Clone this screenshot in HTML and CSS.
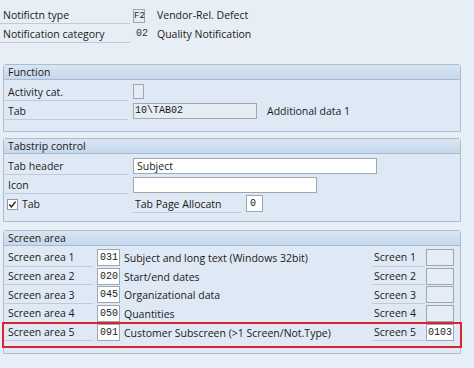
FILE: index.html
```html
<!DOCTYPE html>
<html lang="en">
<head>
    <meta charset="UTF-8">
    <title>Notification type settings</title>
    <link rel="stylesheet" href="styles.css">
</head>
<body>
    <div class="top">
        <div class="row">
            <span class="lbl">Notifictn type</span>
            <span class="fld fld-ro w-f2">F2</span>
            <span class="txt txt-f2">Vendor-Rel. Defect</span>
        </div>
        <div class="row">
            <span class="lbl">Notification category</span>
            <span class="val">02</span>
            <span class="txt">Quality Notification</span>
        </div>
    </div>

    <div class="group g-function">
        <div class="group-hd">Function</div>
        <div class="group-body">
            <div class="row">
                <span class="lbl">Activity cat.</span>
                <span class="fld fld-ro w-chk"></span>
            </div>
            <div class="row">
                <span class="lbl">Tab</span>
                <span class="fld fld-ro w-tab">10\TAB02</span>
                <span class="txt txt-add">Additional data 1</span>
            </div>
        </div>
    </div>

    <div class="group g-tabstrip">
        <div class="group-hd">Tabstrip control</div>
        <div class="group-body">
            <div class="row">
                <span class="lbl">Tab header</span>
                <span class="fld w-subject sans">Subject</span>
            </div>
            <div class="row">
                <span class="lbl">Icon</span>
                <span class="fld w-icon"></span>
            </div>
            <div class="row">
                <span class="lbl lbl-plain">
                    <svg class="cb" width="11" height="11" viewBox="0 0 11 11">
                        <rect x="0.5" y="0.5" width="10" height="10" fill="#fff" stroke="#8d98a4"/>
                        <path d="M2.3 5.6 L4.4 7.9 L8.6 2.6" fill="none" stroke="#1e1e1e" stroke-width="1.5"/>
                    </svg>
                    Tab
                </span>
                <span class="lbl lbl-alloc">Tab Page Allocatn</span>
                <span class="fld w-zero">0</span>
            </div>
        </div>
    </div>

    <div class="group g-screen">
        <div class="group-hd">Screen area</div>
        <div class="group-body">
            <div class="row sa-row">
                <span class="lbl lbl-sa">Screen area 1</span>
                <span class="fld w-sa">031</span>
                <span class="txt desc">Subject and long text (Windows 32bit)</span>
                <span class="lbl lbl-scr">Screen 1</span>
                <span class="fld fld-ro w-scr"></span>
            </div>
            <div class="row sa-row">
                <span class="lbl lbl-sa">Screen area 2</span>
                <span class="fld w-sa">020</span>
                <span class="txt desc">Start/end dates</span>
                <span class="lbl lbl-scr">Screen 2</span>
                <span class="fld fld-ro w-scr"></span>
            </div>
            <div class="row sa-row">
                <span class="lbl lbl-sa">Screen area 3</span>
                <span class="fld w-sa">045</span>
                <span class="txt desc">Organizational data</span>
                <span class="lbl lbl-scr">Screen 3</span>
                <span class="fld fld-ro w-scr"></span>
            </div>
            <div class="row sa-row">
                <span class="lbl lbl-sa">Screen area 4</span>
                <span class="fld w-sa">050</span>
                <span class="txt desc">Quantities</span>
                <span class="lbl lbl-scr">Screen 4</span>
                <span class="fld fld-ro w-scr"></span>
            </div>
            <div class="row sa-row marked">
                <span class="lbl lbl-sa">Screen area 5</span>
                <span class="fld w-sa">091</span>
                <span class="txt desc">Customer Subscreen (&gt;1 Screen/Not.Type)</span>
                <span class="lbl lbl-scr">Screen 5</span>
                <span class="fld w-scr">0103</span>
            </div>
        </div>
    </div>
</body>
</html>
```

FILE: styles.css
```css
body {
    margin: 0;
    background: #e8eef5;
    font-family: "Open Sans", "Liberation Sans", sans-serif;
    font-size: 10.5px;
    color: #1a1a1a;
}
.top {
    padding-top: 5px;
}
.row {
    display: flex;
    align-items: center;
    height: 19px;
}
.lbl {
    box-sizing: border-box;
    align-self: stretch;
    display: flex;
    align-items: center;
    padding-top: 1px;
    border-bottom: 1px solid #c2cbd5;
    white-space: nowrap;
}
.top .lbl {
    width: 130px;
    padding-left: 3px;
    margin-right: 3px;
}
.group .lbl {
    width: 123px;
    margin-left: 1px;
    padding-left: 3px;
    margin-right: 5px;
}
.group .lbl-plain {
    border-bottom: none;
    padding-left: 2px;
}
.cb {
    margin-right: 4px;
}
.fld {
    box-sizing: border-box;
    height: 16px;
    border: 1px solid #9ea8b3;
    background: #fff;
    font-family: "Liberation Mono", "Courier New", monospace;
    font-size: 10px;
    line-height: 14px;
    padding: 0 1px;
    white-space: nowrap;
}
.fld-ro {
    background: #e6ecf3;
}
.sans {
    font-family: "Open Sans", "Liberation Sans", sans-serif;
    font-size: 10.5px;
    padding-left: 3px;
}
.val {
    font-family: "Liberation Mono", "Courier New", monospace;
    font-size: 10px;
    width: 13px;
    padding-left: 3px;
    color: #333;
}
.txt {
    margin-left: 8px;
    padding-top: 1px;
    white-space: nowrap;
}
.txt-f2 {
    margin-left: 12px;
}
.w-f2 {
    width: 12px;
    height: 14px;
    line-height: 12px;
    align-self: flex-end;
    margin-bottom: 1px;
    padding: 0;
    text-align: center;
    font-size: 9px;
}
.w-chk {
    width: 11px;
    height: 15px;
}
.w-tab {
    width: 124px;
}
.txt-add {
    margin-left: 10px;
}
.w-subject {
    width: 244px;
}
.w-icon {
    width: 184px;
}
.w-zero {
    width: 17px;
    height: 17px;
    line-height: 15px;
    padding-left: 3px;
}
.group .lbl-alloc {
    width: 108px;
    margin-left: 0;
    padding-left: 2px;
}

/* group boxes */
.group {
    margin: 0 13px 0 3px;
    border: 1px solid #adbdd0;
    border-radius: 3px 3px 0 0;
    background: #dfe9f5;
}
.group-hd {
    height: 14px;
    line-height: 14px;
    padding-left: 4px;
    background: linear-gradient(#d9e5f2, #c6d8ec);
    border-bottom: 1px solid #a6bbd2;
}
.group-body {
    padding-top: 2px;
}
.g-function {
    margin-top: 21px;
}
.g-function .group-body {
    padding-bottom: 11px;
}
.g-tabstrip {
    margin-top: 6px;
}
.g-tabstrip .group-body {
    padding-bottom: 8px;
}
.g-screen {
    margin-top: 8px;
}
.g-screen .group-body {
    padding-bottom: 12px;
}

/* screen area rows */
.sa-row {
    height: 18.7px;
}
.group .lbl-sa {
    width: 88px;
    margin-right: 4px;
}
.w-sa {
    width: 23px;
    height: 17px;
    line-height: 15px;
    padding-left: 2px;
}
.desc {
    flex: 1;
    margin-left: 4px;
}
.group .lbl-scr {
    width: 53px;
    margin: 0 1px 0 0;
    padding-left: 2px;
}
.w-scr {
    width: 28px;
    height: 17px;
    line-height: 15px;
    margin-right: 6px;
}
.marked {
    position: relative;
}
.marked::after {
    content: "";
    position: absolute;
    left: -2px;
    right: -2px;
    top: -1px;
    bottom: -7px;
    border: 2px solid #d62530;
}
```
